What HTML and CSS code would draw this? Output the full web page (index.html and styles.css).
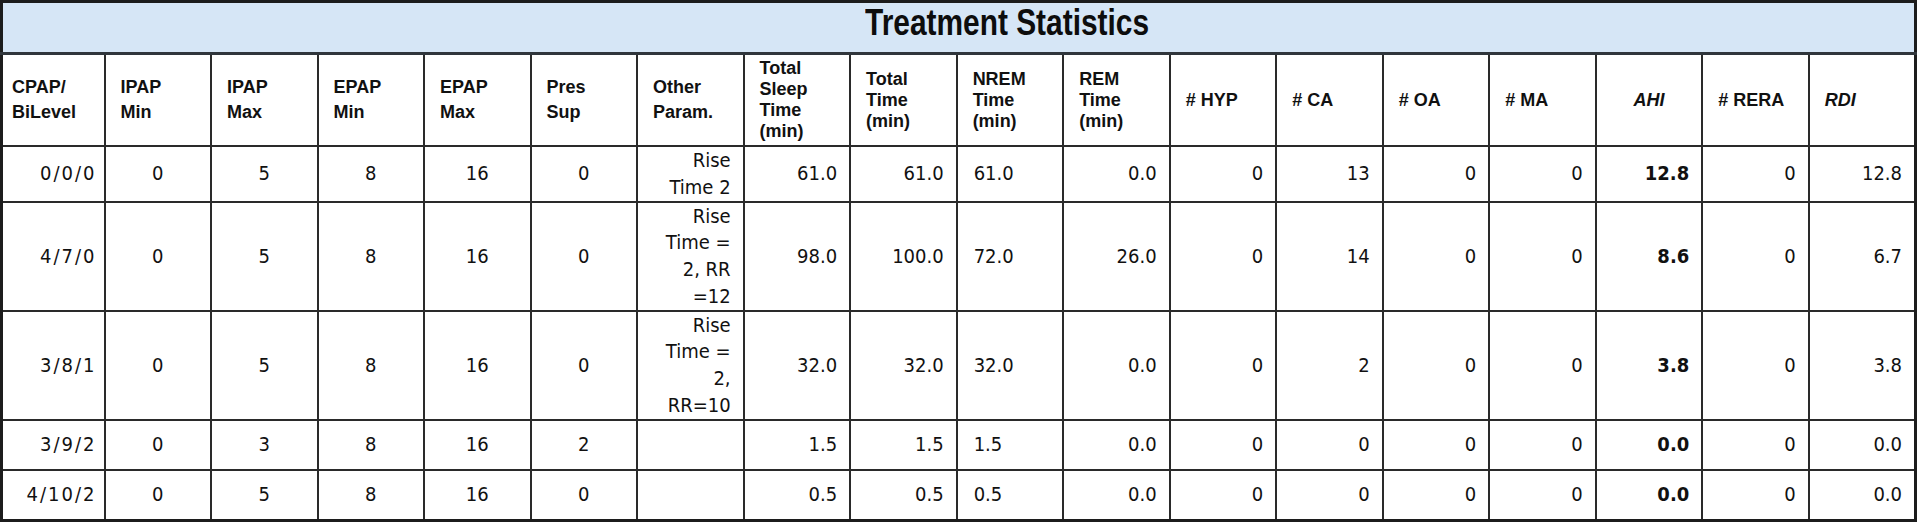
FILE: index.html
```html
<!DOCTYPE html>
<html>
<head>
<meta charset="utf-8">
<link rel="stylesheet" href="styles.css">
</head>
<body>
<table class="stats">
  <colgroup>
    <col class="col-first">
    <col span="17">
  </colgroup>
  <thead>
    <tr class="title-row"><th colspan="18" class="title"><span class="title-text">Treatment Statistics</span></th></tr>
    <tr class="head-row">
      <th class="h h-first h2">CPAP/<br>BiLevel</th>
      <th class="h h2">IPAP<br>Min</th>
      <th class="h h2">IPAP<br>Max</th>
      <th class="h h2">EPAP<br>Min</th>
      <th class="h h2">EPAP<br>Max</th>
      <th class="h h2">Pres<br>Sup</th>
      <th class="h h2">Other<br>Param.</th>
      <th class="h">Total<br>Sleep<br>Time<br>(min)</th>
      <th class="h">Total<br>Time<br>(min)</th>
      <th class="h">NREM<br>Time<br>(min)</th>
      <th class="h">REM<br>Time<br>(min)</th>
      <th class="h"># HYP</th>
      <th class="h"># CA</th>
      <th class="h"># OA</th>
      <th class="h"># MA</th>
      <th class="h h-center"><i>AHI</i></th>
      <th class="h"># RERA</th>
      <th class="h"><i>RDI</i></th>
    </tr>
  </thead>
  <tbody>
    <tr>
      <td class="r mode">0/0/0</td><td class="c">0</td><td class="c">5</td><td class="c">8</td><td class="c">16</td><td class="c">0</td>
      <td class="r">Rise<br>Time 2</td><td class="r">61.0</td><td class="r">61.0</td><td class="l">61.0</td><td class="r">0.0</td>
      <td class="r">0</td><td class="r">13</td><td class="r">0</td><td class="r">0</td><td class="r b">12.8</td><td class="r">0</td><td class="r">12.8</td>
    </tr>
    <tr>
      <td class="r mode">4/7/0</td><td class="c">0</td><td class="c">5</td><td class="c">8</td><td class="c">16</td><td class="c">0</td>
      <td class="r">Rise<br>Time =<br>2, RR<br>=12</td><td class="r">98.0</td><td class="r">100.0</td><td class="l">72.0</td><td class="r">26.0</td>
      <td class="r">0</td><td class="r">14</td><td class="r">0</td><td class="r">0</td><td class="r b">8.6</td><td class="r">0</td><td class="r">6.7</td>
    </tr>
    <tr>
      <td class="r mode">3/8/1</td><td class="c">0</td><td class="c">5</td><td class="c">8</td><td class="c">16</td><td class="c">0</td>
      <td class="r">Rise<br>Time =<br>2,<br>RR=10</td><td class="r">32.0</td><td class="r">32.0</td><td class="l">32.0</td><td class="r">0.0</td>
      <td class="r">0</td><td class="r">2</td><td class="r">0</td><td class="r">0</td><td class="r b">3.8</td><td class="r">0</td><td class="r">3.8</td>
    </tr>
    <tr>
      <td class="r mode">3/9/2</td><td class="c">0</td><td class="c">3</td><td class="c">8</td><td class="c">16</td><td class="c">2</td>
      <td class="r"></td><td class="r">1.5</td><td class="r">1.5</td><td class="l">1.5</td><td class="r">0.0</td>
      <td class="r">0</td><td class="r">0</td><td class="r">0</td><td class="r">0</td><td class="r b">0.0</td><td class="r">0</td><td class="r">0.0</td>
    </tr>
    <tr>
      <td class="r mode">4/10/2</td><td class="c">0</td><td class="c">5</td><td class="c">8</td><td class="c">16</td><td class="c">0</td>
      <td class="r"></td><td class="r">0.5</td><td class="r">0.5</td><td class="l">0.5</td><td class="r">0.0</td>
      <td class="r">0</td><td class="r">0</td><td class="r">0</td><td class="r">0</td><td class="r b">0.0</td><td class="r">0</td><td class="r">0.0</td>
    </tr>
  </tbody>
</table>
</body>
</html>
```
FILE: styles.css
```css
html, body {
  margin: 0;
  padding: 0;
  background: #ffffff;
}

.stats {
  width: 1917px;
  border-collapse: collapse;
  table-layout: fixed;
  border: 3px solid #1c1c1c;
  color: #111;
}

.stats .col-first {
  width: 103px;
}

.stats th,
.stats td {
  border: 2px solid #2a2a2a;
  padding: 0;
}

.title-row .title {
  height: 47px;
  background: #d6e6f6;
  text-align: center;
  vertical-align: middle;
  padding: 0 0 2px 98px;
  border-bottom: 3px solid #30363c;
  line-height: 40px;
}

.title-text {
  display: inline-block;
  font-family: "Liberation Sans", Arial, sans-serif;
  font-weight: bold;
  font-size: 36px;
  line-height: 40px;
  color: #0d0d0d;
  transform: scaleX(0.83);
}

.head-row .h {
  height: 90px;
  font-family: "Liberation Sans", Arial, sans-serif;
  font-weight: bold;
  font-size: 18px;
  line-height: 21px;
  text-align: left;
  vertical-align: middle;
  padding-left: 15px;
}

.head-row .h2 {
  line-height: 25px;
}

.head-row .h-first {
  padding-left: 9px;
}

.head-row .h-center {
  text-align: center;
  padding-left: 0;
}

.stats td {
  font-family: "DejaVu Sans Condensed", "DejaVu Sans", sans-serif;
  font-stretch: condensed;
  font-size: 20px;
  line-height: 26.75px;
  vertical-align: middle;
  height: 48px;
}

.stats td.r {
  text-align: right;
  padding-right: 12px;
}

.stats td.mode {
  letter-spacing: 2px;
  padding-right: 7px;
}

.stats td.c {
  text-align: center;
}

.stats td.l {
  text-align: left;
  padding-left: 16px;
}

.stats td.b {
  font-weight: bold;
}
```
